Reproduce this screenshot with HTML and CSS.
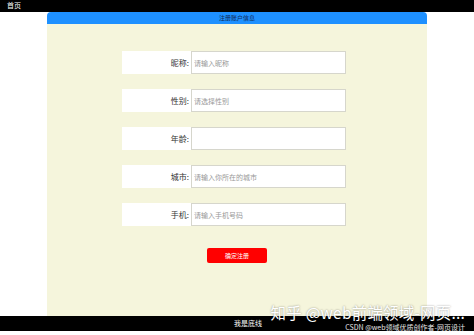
FILE: index.html
```html
<!DOCTYPE html>
<html lang="zh">
<head>
<meta charset="utf-8">
<title>注册账户信息</title>
<link rel="stylesheet" href="styles.css">
</head>
<body>
<div class="topbar"><span class="home">首页</span></div>
<div class="wrap">
  <div class="head">注册账户信息</div>
  <div class="panel">
    <div class="row"><label class="lbl">昵称:</label><input class="inp" placeholder="请输入昵称"></div>
    <div class="row"><label class="lbl">性别:</label><input class="inp" placeholder="请选择性别"></div>
    <div class="row"><label class="lbl">年龄:</label><input class="inp"></div>
    <div class="row"><label class="lbl">城市:</label><input class="inp" placeholder="请输入你所在的城市"></div>
    <div class="row"><label class="lbl">手机:</label><input class="inp" placeholder="请输入手机号码"></div>
    <div class="btnrow"><button class="btn">确定注册</button></div>
  </div>
</div>
<div class="footer">我是底线</div>
<div class="wm">
  <div class="wm-big">知乎 @web前端领域-网页...</div>
  <div class="wm-small">CSDN @web领域优质创作者-网页设计</div>
</div>
</body>
</html>
```
FILE: styles.css
```css
* { box-sizing: border-box; }
html, body { margin: 0; padding: 0; }
body {
  width: 474px;
  height: 335px;
  background: #fff;
  font-family: "Noto Sans CJK SC", "Liberation Sans", sans-serif;
  position: relative;
  overflow: hidden;
}
.topbar {
  height: 12px;
  background: #000;
  color: #fff;
  font-size: 7px;
  line-height: 11px;
  padding-left: 7px;
}
.wrap {
  width: 380px;
  margin: 0 auto;
}
.head {
  height: 12px;
  background: #1e90ff;
  border-radius: 4px 4px 0 0;
  color: #102a55;
  font-size: 6px;
  line-height: 12px;
  text-align: center;
}
.panel {
  height: 292px;
  background: #f5f5dc;
  padding-top: 27px;
  padding-left: 75px;
}
.row {
  display: flex;
  height: 23px;
  margin-bottom: 15px;
}
.lbl {
  width: 69px;
  background: #fff;
  color: #333;
  font-size: 8px;
  line-height: 23px;
  text-align: right;
  padding-right: 2px;
}
.inp {
  width: 155px;
  height: 23px;
  margin: 0;
  border: 1px solid #d6d6cc;
  background: #fff;
  font-family: inherit;
  font-size: 7px;
  padding: 0 2px;
  outline: none;
}
.inp::placeholder { color: #999; }
.btnrow {
  display: flex;
  justify-content: center;
  padding-top: 7px;
  margin-left: -75px;
}
.btn {
  width: 60px;
  height: 15px;
  background: #ff0000;
  border: none;
  border-radius: 2px;
  color: #fff;
  font-family: inherit;
  font-size: 6px;
  padding: 0;
}
.footer {
  height: 15px;
  background: #000;
  color: #fff;
  font-size: 7px;
  line-height: 15px;
  text-align: center;
  padding-left: 22px;
}
.wm {
  position: absolute;
  right: 9px;
  top: 302px;
  text-align: right;
  color: #fff;
}
.wm-big {
  font-size: 15.5px;
  line-height: 20px;
  letter-spacing: 0.2px;
  text-shadow: 0 0 2px rgba(0,0,0,0.45);
}
.wm-small {
  font-size: 7px;
  line-height: 10px;
  color: #e6e6e6;
}
```
